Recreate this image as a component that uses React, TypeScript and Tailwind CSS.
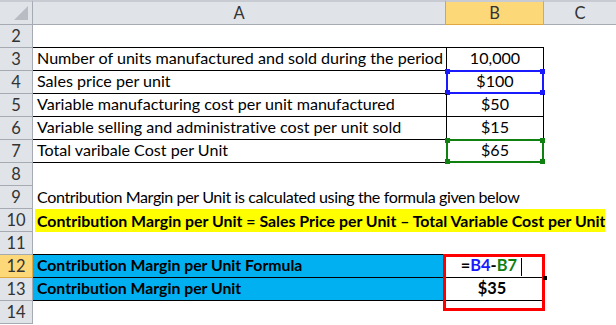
import React from 'react';

const font = { fontFamily: 'Lato, "Open Sans", sans-serif' };

const hdr = 'bg-[#e0e3e8] border-r border-b border-[#a6abb3] text-[#333] flex items-center justify-center text-[16.5px]';
const hdrSel = 'bg-[#fcd878] border-r border-b border-[#e0a93f] text-[#333] flex items-center justify-center text-[16.5px]';

function RowNum({ n, sel }: { n: number; sel?: boolean }) {
    return <div className={(sel ? hdrSel : hdr) + ' h-[23px] pt-[1px]'}>{n}</div>;
}

function Handles({ color }: { color: string }) {
    const c = `absolute w-[5px] h-[5px] ${color}`;
    return (
        <>
            <div className={`${c} -left-[3px] -top-[3px]`} />
            <div className={`${c} -right-[3px] -top-[3px]`} />
            <div className={`${c} -left-[3px] -bottom-[3px]`} />
            <div className={`${c} -right-[3px] -bottom-[3px]`} />
        </>
    );
}

const rows: { n: number; label: string; value: string }[] = [
    { n: 3, label: 'Number of units manufactured and sold during the period', value: '10,000' },
    { n: 4, label: 'Sales price per unit', value: '$100' },
    { n: 5, label: 'Variable manufacturing cost per unit manufactured', value: '$50' },
    { n: 6, label: 'Variable selling and administrative cost per unit sold', value: '$15' },
    { n: 7, label: 'Total varibale Cost per Unit', value: '$65' },
];

export default function App() {
    return (
        <div className="w-[616px] h-[325px] overflow-hidden bg-white text-black text-[16.1px] leading-none [font-variant-ligatures:none]" style={font}>
            <div className="grid grid-cols-[33px_413px_98px_72px] grid-rows-[25px_repeat(13,23px)]">
                {/* column headers */}
                <div className="relative bg-[#e0e3e8] border-r border-b border-t-2 border-t-[#c8ccd2] border-[#a6abb3]">
                    <div className="absolute right-[4px] bottom-[4px] w-0 h-0 border-l-[14px] border-l-transparent border-b-[14px] border-b-[#b9bdc3]" />
                </div>
                <div className={hdr + ' border-t-2 border-t-[#c8ccd2]'}>A</div>
                <div className={hdrSel + ' border-t-2 border-t-[#c8ccd2]'}>B</div>
                <div className={hdr + ' border-t-2 border-t-[#c8ccd2] border-r-0'}>C</div>

                {/* row 2 */}
                <RowNum n={2} />
                <div className="border-b border-black" />
                <div className="border-b border-black" />
                <div />

                {rows.map((r) => (
                    <React.Fragment key={r.n}>
                        <RowNum n={r.n} />
                        <div className="border-b border-black flex items-end pl-[4px] pb-[4px] whitespace-nowrap">{r.label}</div>
                        <div className="relative border-b border-l border-r border-black flex items-end justify-center pb-[4px]">
                            {r.value}
                            {r.n === 4 && (
                                <div className="absolute -left-[1px] -top-[1px] -right-[1px] -bottom-[1px] border-2 border-[#1a1aff]">
                                    <Handles color="bg-[#1a1aff]" />
                                </div>
                            )}
                            {r.n === 7 && (
                                <div className="absolute -left-[1px] -top-[1px] -right-[1px] -bottom-[1px] border-2 border-[#108010]">
                                    <Handles color="bg-[#108010]" />
                                </div>
                            )}
                        </div>
                        <div />
                    </React.Fragment>
                ))}

                {/* row 8 */}
                <RowNum n={8} />
                <div className="col-span-3" />

                {/* row 9 */}
                <RowNum n={9} />
                <div className="col-span-3 flex items-end pl-[4px] pb-[4px] whitespace-nowrap tracking-[-0.4px]">
                    Contribution Margin per Unit is calculated using the formula given below
                </div>

                {/* row 10 */}
                <RowNum n={10} />
                <div className="col-span-3 flex items-stretch pl-[2px] pr-[11px]">
                    <div className="flex-1 bg-[#ffff00] flex items-end pl-[2px] pb-[3px] font-bold whitespace-nowrap text-[15.9px]">
                        Contribution Margin per Unit = Sales Price per Unit – Total Variable Cost per Unit
                    </div>
                </div>

                {/* row 11 */}
                <RowNum n={11} />
                <div className="col-span-3 border-b border-black mr-[72px]" />

                {/* row 12 */}
                <RowNum n={12} sel />
                <div className="bg-[#00b0f0] border-b border-black flex items-end pl-[4px] pb-[4px] font-bold whitespace-nowrap text-[15.8px]">
                    Contribution Margin per Unit Formula
                </div>
                <div className="relative border-b border-black flex items-end justify-end pr-[27px] pb-[4px] font-bold text-[16.4px]">
                    <span>=</span>
                    <span className="text-[#1a1aff]">B4</span>
                    <span>-</span>
                    <span className="text-[#108010]">B7</span>
                    <div className="absolute right-[22px] top-[3px] w-px h-[18px] bg-black" />
                    <div className="absolute -left-[3px] -top-[1px] w-[102px] h-[57px] border-[3px] border-[#ff0000]" />
                    <div className="absolute -right-[3px] -bottom-[3px] w-[4px] h-[4px] bg-black" />
                </div>
                <div />

                {/* row 13 */}
                <RowNum n={13} />
                <div className="bg-[#00b0f0] border-b border-black flex items-end pl-[4px] pb-[4px] font-bold whitespace-nowrap text-[15.8px]">
                    Contribution Margin per Unit
                </div>
                <div className="border-b border-black flex items-end justify-center pr-[6px] pb-[4px] font-bold text-[16.4px]">$35</div>
                <div />

                {/* row 14 */}
                <RowNum n={14} />
                <div className="col-span-3" />
            </div>
        </div>
    );
}
